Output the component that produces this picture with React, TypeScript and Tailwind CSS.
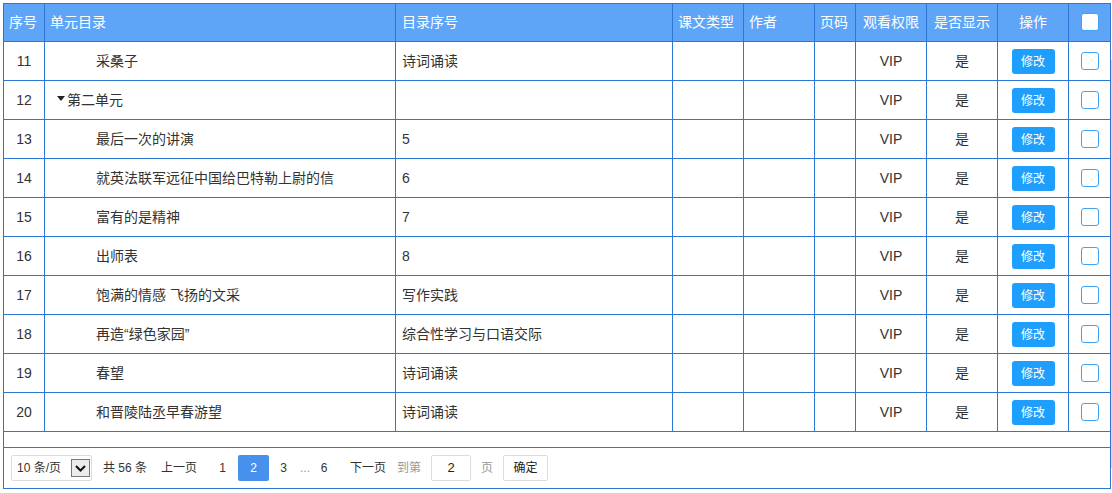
import React from "react";

type Row = { no: number; name: string; code: string; parent?: boolean };

const rows: Row[] = [
  { no: 11, name: "采桑子", code: "诗词诵读" },
  { no: 12, name: "第二单元", code: "", parent: true },
  { no: 13, name: "最后一次的讲演", code: "5" },
  { no: 14, name: "就英法联军远征中国给巴特勒上尉的信", code: "6" },
  { no: 15, name: "富有的是精神", code: "7" },
  { no: 16, name: "出师表", code: "8" },
  { no: 17, name: "饱满的情感 飞扬的文采", code: "写作实践" },
  { no: 18, name: "再造“绿色家园”", code: "综合性学习与口语交际" },
  { no: 19, name: "春望", code: "诗词诵读" },
  { no: 20, name: "和晋陵陆丞早春游望", code: "诗词诵读" },
];

const cellB = "border-b border-r border-[#2b77d3]";
const cellLast = "border-b border-[#2b77d3]";

function Box() {
  return <div className="mx-auto w-[18px] h-[18px] rounded-[3px] border border-[#41a3f3] bg-white" />;
}

export default function App() {
  return (
    <div className="font-['Liberation_Sans','Noto_Sans_CJK_SC',sans-serif] text-[#333] bg-white w-[1112px] h-[493px] overflow-hidden">
      <div className="flex pt-[3px] pl-[3px]">
        <div className="w-[1108px] border border-[#2b77d3]">
          <table className="table-fixed border-separate border-spacing-0 w-[1106px]">
            <thead>
              <tr className="h-[38px] bg-[#5ea4f7] text-white text-[14px]">
                <th className={`${cellB} w-[41px] font-normal text-left pl-[5px]`}>序号</th>
                <th className={`${cellB} w-[351px] font-normal text-left pl-[5px]`}>单元目录</th>
                <th className={`${cellB} w-[277px] font-normal text-left pl-[6px]`}>目录序号</th>
                <th className={`${cellB} w-[71px] font-normal text-left pl-[5px]`}>课文类型</th>
                <th className={`${cellB} w-[71px] font-normal text-left pl-[5px]`}>作者</th>
                <th className={`${cellB} w-[41px] font-normal text-left pl-[5px]`}>页码</th>
                <th className={`${cellB} w-[71px] font-normal text-center`}>观看权限</th>
                <th className={`${cellB} w-[71px] font-normal text-center`}>是否显示</th>
                <th className={`${cellB} w-[71px] font-normal text-center`}>操作</th>
                <th className={`${cellLast} w-[41px] font-normal`}>
                  <div className="-mt-[2px]">
                    <Box />
                  </div>
                </th>
              </tr>
            </thead>
            <tbody className="text-[14px]">
              {rows.map((r) => (
                <tr key={r.no} className="h-[39px]">
                  <td className={`${cellB} text-center`}>{r.no}</td>
                  <td className={`${cellB}`}>
                    {r.parent ? (
                      <div className="flex items-center pl-[12px]">
                        <span className="w-0 h-0 border-l-[4px] border-r-[4px] border-t-[5px] border-l-transparent border-r-transparent border-t-[#222] mr-[2px] -mt-[3px]" />
                        <span>{r.name}</span>
                      </div>
                    ) : (
                      <div className="pl-[51px]">{r.name}</div>
                    )}
                  </td>
                  <td className={`${cellB} pl-[6px]`}>{r.code}</td>
                  <td className={cellB}></td>
                  <td className={cellB}></td>
                  <td className={cellB}></td>
                  <td className={`${cellB} text-center`}>VIP</td>
                  <td className={`${cellB} text-center`}>是</td>
                  <td className={`${cellB}`}>
                    <div className="mx-auto mt-[1px] w-[43px] h-[25px] rounded-[3px] bg-[#1e9ffe] text-white text-[12px] flex items-center justify-center">
                      修改
                    </div>
                  </td>
                  <td className={cellLast}>
                    <Box />
                  </td>
                </tr>
              ))}
            </tbody>
          </table>
          <div className="h-[16px] border-b border-[#2b77d3]" />
          <div className="h-[40px] pt-[7px] flex items-start text-[12px]">
            <div className="ml-[7px] w-[81px] h-[26px] border border-[#ddd] rounded-[2px] flex items-center pl-[5px]">
              <span className="w-[54px]">10 条/页</span>
              <div className="w-[19px] h-[18px] border border-[#777] bg-[#ececec] flex items-center justify-center">
                <svg width="11" height="7" viewBox="0 0 11 7">
                  <path d="M1 1l4.5 4.5L10 1" fill="none" stroke="#111" strokeWidth="2" />
                </svg>
              </div>
            </div>
            <span className="ml-[11px] h-[26px] leading-[26px]">共 56 条</span>
            <span className="ml-[14px] h-[26px] leading-[26px]">上一页</span>
            <span className="ml-[10px] w-[31px] h-[26px] leading-[26px] text-center">1</span>
            <span className="w-[31px] h-[26px] leading-[26px] text-center bg-[#4790ec] text-white rounded-[2px]">2</span>
            <span className="w-[29px] h-[26px] leading-[26px] text-center">3</span>
            <span className="w-[14px] h-[26px] leading-[26px] text-center text-[#999]">...</span>
            <span className="w-[24px] h-[26px] leading-[26px] text-center">6</span>
            <span className="ml-[14px] h-[26px] leading-[26px]">下一页</span>
            <span className="ml-[11px] h-[26px] leading-[26px] text-[#999]">到第</span>
            <div className="ml-[10px] w-[40px] h-[26px] border border-[#ddd] rounded-[2px] flex items-center justify-center text-[13px] text-[#222]">
              2
            </div>
            <span className="ml-[10px] h-[26px] leading-[26px] text-[#999]">页</span>
            <div className="ml-[10px] w-[45px] h-[26px] border border-[#ddd] rounded-[2px] flex items-center justify-center text-[#222]">
              确定
            </div>
          </div>
        </div>
        <div className="w-[1px] mt-[57px] h-[408px] bg-[#d9d9d9]" />
      </div>
    </div>
  );
}
